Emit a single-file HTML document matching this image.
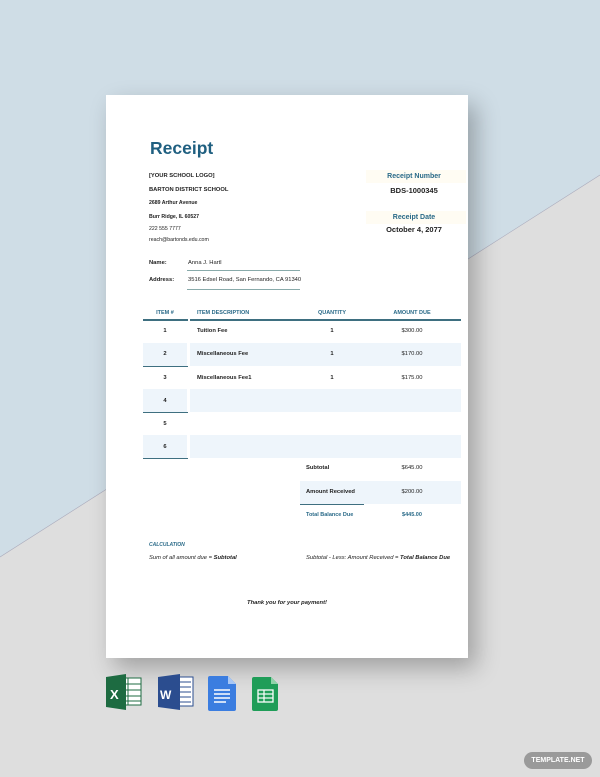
<!DOCTYPE html>
<html><head><style>
*{margin:0;padding:0;box-sizing:border-box}
body{width:600px;height:777px;position:relative;overflow:hidden;background:#cfdde6;font-family:"Liberation Sans",sans-serif}
.a{position:absolute;white-space:nowrap}
#paper{position:absolute;left:106px;top:95px;width:362px;height:563px;background:#fff;box-shadow:8px 10px 22px rgba(0,0,0,.28)}
.s{font-size:5.8px;font-weight:bold;color:#222}
.t{font-size:5.8px;color:#222}
.h{font-size:6px;font-weight:bold;color:#2a6a88}
.c{text-align:center}
</style></head><body>
<svg class="a" style="left:0;top:0" width="600" height="777"><polygon points="0,557 600,175 600,777 0,777" fill="#dedede"/><line x1="0" y1="557" x2="600" y2="175" stroke="#aab" stroke-width=".6"/></svg>
<div id="paper"></div>
<div class="a" style="left:150px;top:138px;font-size:17.5px;font-weight:bold;color:#1f5f80">Receipt</div>
<div class="a s" style="left:149px;top:173px">[YOUR SCHOOL LOGO]</div>
<div class="a s" style="left:149px;top:187px">BARTON DISTRICT SCHOOL</div>
<div class="a s" style="left:149px;top:200px;font-size:5.2px">2689 Arthur Avenue</div>
<div class="a s" style="left:149px;top:214px;font-size:5.2px">Burr Ridge, IL 60527</div>
<div class="a t" style="left:149px;top:226px;font-size:5.2px">222 555 7777</div>
<div class="a t" style="left:149px;top:237px;font-size:5.2px">reach@bartonds.edu.com</div>
<div class="a" style="left:366px;top:170px;width:100px;height:13px;background:#fffcf3"></div>
<div class="a h c" style="left:366px;top:173px;width:96px;font-size:7px">Receipt Number</div>
<div class="a c" style="left:366px;top:186px;width:96px;font-size:7.5px;font-weight:bold;color:#222">BDS-1000345</div>
<div class="a" style="left:366px;top:211px;width:100px;height:13px;background:#fffcf3"></div>
<div class="a h c" style="left:366px;top:214px;width:96px;font-size:7px">Receipt Date</div>
<div class="a c" style="left:366px;top:225px;width:96px;font-size:7.5px;font-weight:bold;color:#222">October 4, 2077</div>
<div class="a s" style="left:149px;top:260px">Name:</div>
<div class="a t" style="left:188px;top:260px">Anna J. Hartl</div>
<div class="a" style="left:187px;top:270px;width:113px;height:1px;background:#8aa"></div>
<div class="a s" style="left:149px;top:277px">Address:</div>
<div class="a t" style="left:188px;top:277px">3516 Edsel Road, San Fernando, CA 91340</div>
<div class="a" style="left:187px;top:289px;width:113px;height:1px;background:#8aa"></div>
<div class="a h c" style="left:143px;top:310px;width:44px;font-size:5.5px">ITEM #</div>
<div class="a h" style="left:197px;top:310px;font-size:5.5px">ITEM DESCRIPTION</div>
<div class="a h c" style="left:302px;top:310px;width:60px;font-size:5.5px">QUANTITY</div>
<div class="a h c" style="left:372px;top:310px;width:80px;font-size:5.5px">AMOUNT DUE</div>
<div class="a" style="left:143px;top:319px;width:45px;height:1.5px;background:#3e6f80"></div>
<div class="a" style="left:190px;top:319px;width:271px;height:1.5px;background:#3e6f80"></div>
<div class="a" style="left:143px;top:343px;width:318px;height:23px;background:#eef5fb"></div>
<div class="a" style="left:143px;top:389px;width:318px;height:23px;background:#eef5fb"></div>
<div class="a" style="left:143px;top:435px;width:318px;height:23px;background:#eef5fb"></div>
<div class="a" style="left:187px;top:343px;width:3px;height:115px;background:#fff"></div>
<div class="a" style="left:143px;top:366px;width:45px;height:1px;background:#3e6f80"></div>
<div class="a" style="left:143px;top:412px;width:45px;height:1px;background:#3e6f80"></div>
<div class="a" style="left:143px;top:458px;width:45px;height:1px;background:#3e6f80"></div>
<div class="a s c" style="left:143px;top:328px;width:44px">1</div>
<div class="a s c" style="left:143px;top:351px;width:44px">2</div>
<div class="a s c" style="left:143px;top:375px;width:44px">3</div>
<div class="a s c" style="left:143px;top:398px;width:44px">4</div>
<div class="a s c" style="left:143px;top:421px;width:44px">5</div>
<div class="a s c" style="left:143px;top:444px;width:44px">6</div>
<div class="a s" style="left:197px;top:328px">Tuition Fee</div>
<div class="a s" style="left:197px;top:351px">Miscellaneous Fee</div>
<div class="a s" style="left:197px;top:375px">Miscellaneous Fee1</div>
<div class="a s c" style="left:302px;top:328px;width:60px">1</div>
<div class="a s c" style="left:302px;top:351px;width:60px">1</div>
<div class="a s c" style="left:302px;top:375px;width:60px">1</div>
<div class="a t c" style="left:372px;top:328px;width:80px">$300.00</div>
<div class="a t c" style="left:372px;top:351px;width:80px">$170.00</div>
<div class="a t c" style="left:372px;top:375px;width:80px">$175.00</div>
<div class="a" style="left:300px;top:481px;width:161px;height:23px;background:#eef5fb"></div>
<div class="a" style="left:300px;top:504px;width:64px;height:1px;background:#3e6f80"></div>
<div class="a s" style="left:306px;top:465px">Subtotal</div>
<div class="a t c" style="left:372px;top:465px;width:80px">$645.00</div>
<div class="a s" style="left:306px;top:489px">Amount Received</div>
<div class="a t c" style="left:372px;top:489px;width:80px">$200.00</div>
<div class="a h" style="left:306px;top:512px;font-size:5.5px">Total Balance Due</div>
<div class="a h c" style="left:372px;top:512px;width:80px;font-size:5.5px">$445.00</div>
<div class="a h" style="left:149px;top:542px;font-size:5px;font-style:italic">CALCULATION</div>
<div class="a t" style="left:149px;top:555px;font-style:italic">Sum of all amount due = <b>Subtotal</b></div>
<div class="a t" style="left:306px;top:555px;font-style:italic">Subtotal - Less: Amount Received = <b>Total Balance Due</b></div>
<div class="a s c" style="left:106px;top:600px;width:362px;font-style:italic">Thank you for your payment!</div>
<svg class="a" style="left:100px;top:672px" width="190" height="42">
<rect x="20" y="6" width="21" height="27" fill="#fff" stroke="#1d6b41"/>
<g stroke="#1d6b41" stroke-width="1"><line x1="28" y1="6" x2="28" y2="33"/><line x1="20" y1="12" x2="41" y2="12"/><line x1="20" y1="18" x2="41" y2="18"/><line x1="20" y1="24" x2="41" y2="24"/><line x1="20" y1="29" x2="41" y2="29"/></g>
<polygon points="6,5 26,2 26,38 6,35" fill="#1d6b41"/>
<text x="10" y="27" font-family="Liberation Sans" font-weight="bold" font-size="13" fill="#fff">X</text>
<rect x="74" y="5" width="19" height="29" fill="#fff" stroke="#2b4d8f"/>
<g stroke="#2b4d8f"><line x1="80" y1="10" x2="91" y2="10"/><line x1="80" y1="15" x2="91" y2="15"/><line x1="80" y1="20" x2="91" y2="20"/><line x1="80" y1="25" x2="91" y2="25"/><line x1="80" y1="30" x2="91" y2="30"/></g>
<polygon points="58,5 80,2 80,38 58,35" fill="#2b4d8f"/>
<text x="60" y="27" font-family="Liberation Sans" font-weight="bold" font-size="12" fill="#fff">W</text>
<path d="M110 4h18l8 8v25a2 2 0 0 1-2 2h-24a2 2 0 0 1-2-2v-31a2 2 0 0 1 2-2z" fill="#3b7de0"/>
<path d="M128 4v8h8z" fill="#a8c7f5"/>
<g stroke="#fff" stroke-width="1.5"><line x1="114" y1="18" x2="130" y2="18"/><line x1="114" y1="22" x2="130" y2="22"/><line x1="114" y1="26" x2="130" y2="26"/><line x1="114" y1="30" x2="126" y2="30"/></g>
<path d="M154 5h17l7 7v25a2 2 0 0 1-2 2h-22a2 2 0 0 1-2-2v-30a2 2 0 0 1 2-2z" fill="#1f9d58"/>
<path d="M171 5v7h7z" fill="#8fd3a9"/>
<rect x="158" y="18" width="15" height="12" fill="none" stroke="#fff" stroke-width="1.3"/>
<g stroke="#fff" stroke-width="1.2"><line x1="158" y1="22" x2="173" y2="22"/><line x1="158" y1="26" x2="173" y2="26"/><line x1="164" y1="18" x2="164" y2="30"/></g>
</svg>
<div class="a" style="left:524px;top:752px;width:68px;height:17px;border-radius:9px;background:#9a9a9a;color:#fff;font-size:7px;font-weight:bold;text-align:center;line-height:17px">TEMPLATE.NET</div>
</body></html>
